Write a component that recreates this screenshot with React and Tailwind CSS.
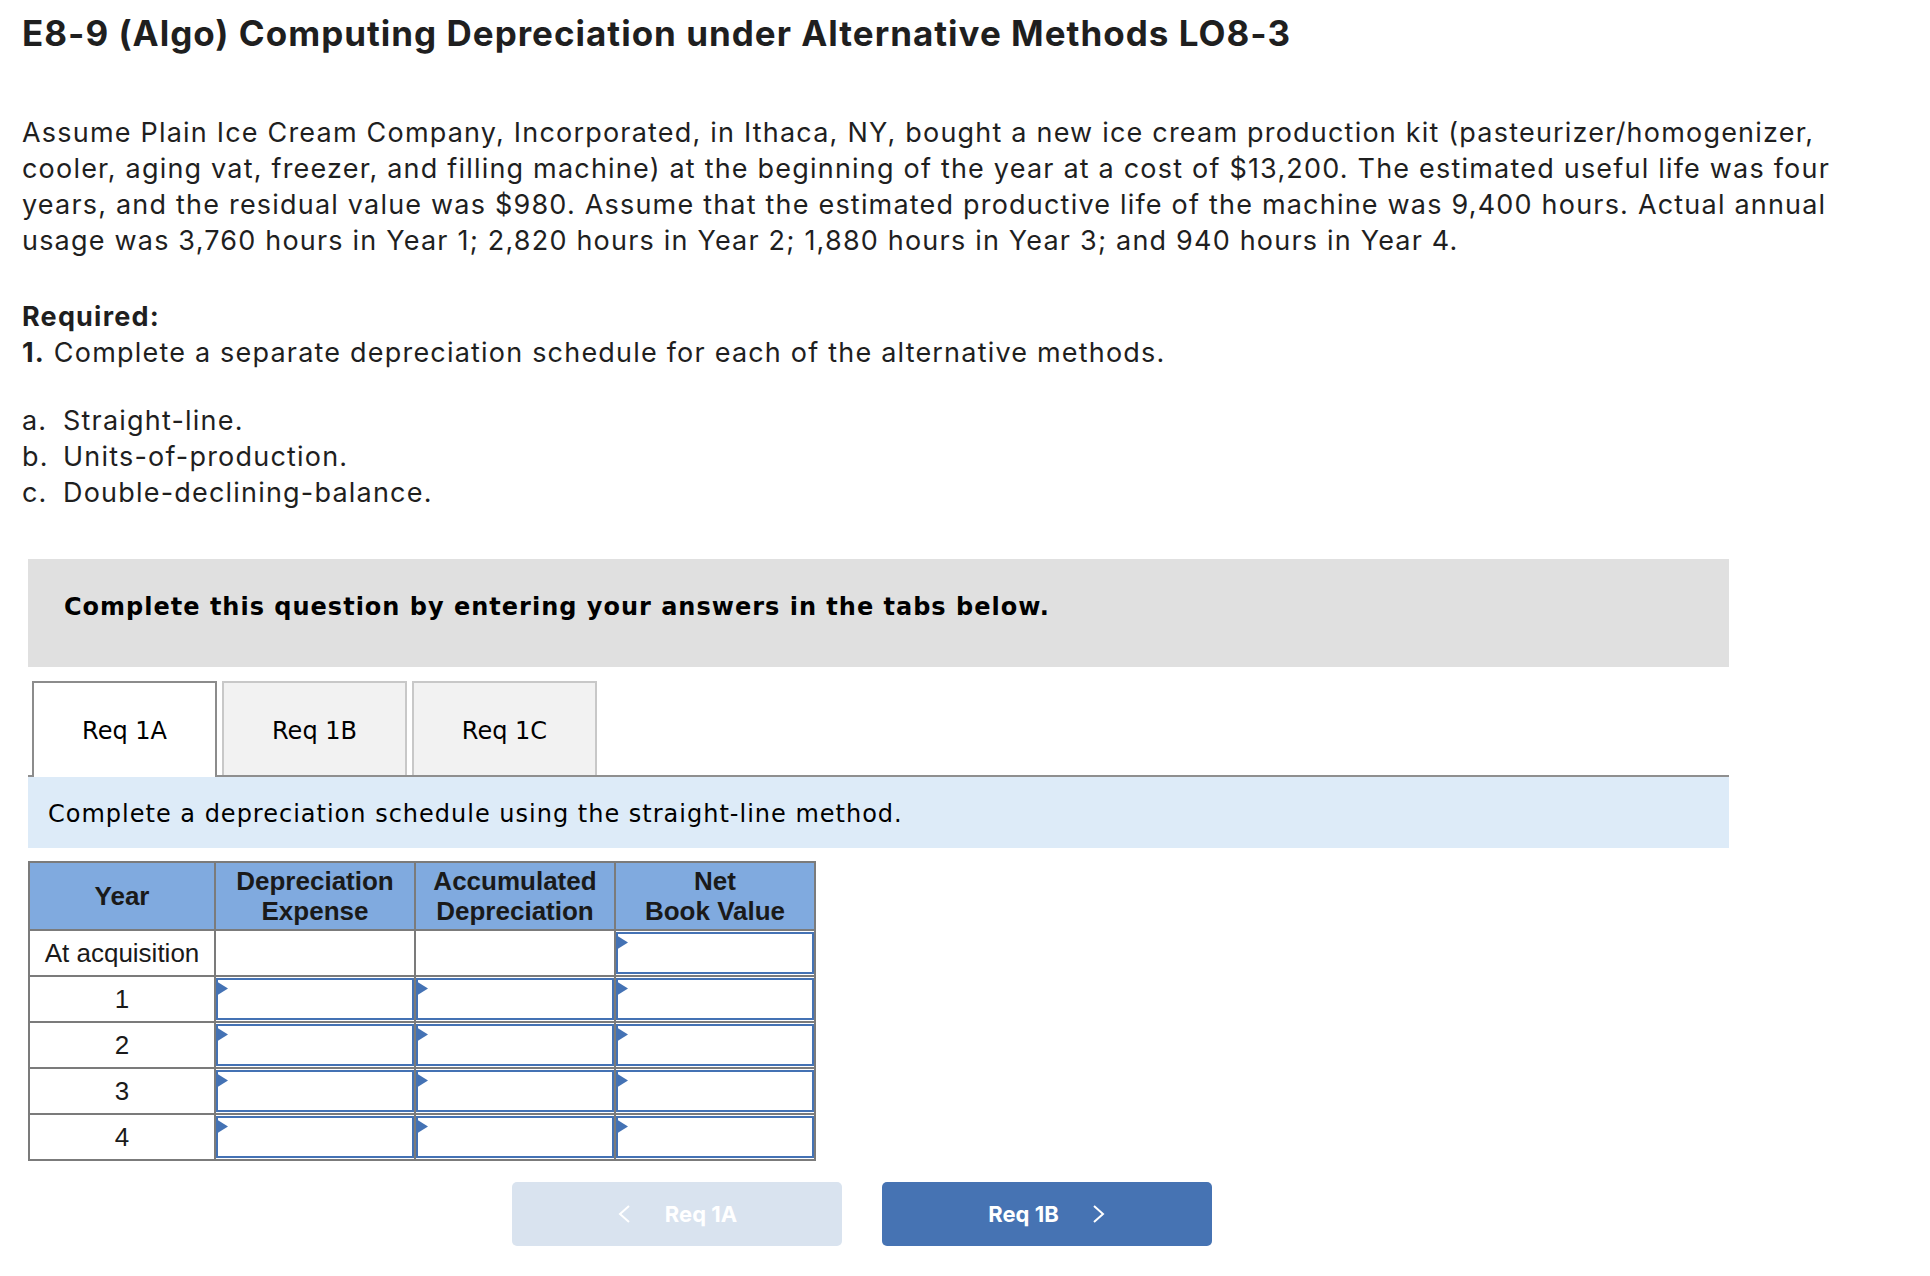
import React from "react";

const sans = { fontFamily: "Inter, 'Open Sans', sans-serif" };
const verdana = { fontFamily: "'DejaVu Sans', Verdana, sans-serif" };
const arial = { fontFamily: "'Liberation Sans', Arial, sans-serif" };

function Tri() {
  return (
    <svg className="absolute left-[-2px] top-[1px]" width="12" height="15" viewBox="0 0 12 15">
      <polygon points="0,0 12,7.5 0,15" fill="#4472b4" />
    </svg>
  );
}

function InputCell() {
  return (
    <td className="border-2 border-[#7b7b7b] p-0 h-[46px]">
      <div className="relative h-[42px] border-2 border-[#4472b4] bg-white">
        <Tri />
      </div>
    </td>
  );
}

function Chevron({ dir }) {
  return (
    <svg width="14" height="18" viewBox="0 0 14 18" fill="none">
      {dir === "left" ? (
        <polyline points="12,1 3,9 12,17" stroke="white" strokeWidth="2" />
      ) : (
        <polyline points="2,1 11,9 2,17" stroke="white" strokeWidth="2" />
      )}
    </svg>
  );
}

export default function App() {
  const lines = [
    "Assume Plain Ice Cream Company, Incorporated, in Ithaca, NY, bought a new ice cream production kit (pasteurizer/homogenizer,",
    "cooler, aging vat, freezer, and filling machine) at the beginning of the year at a cost of $13,200. The estimated useful life was four",
    "years, and the residual value was $980. Assume that the estimated productive life of the machine was 9,400 hours. Actual annual",
    "usage was 3,760 hours in Year 1; 2,820 hours in Year 2; 1,880 hours in Year 3; and 940 hours in Year 4.",
  ];
  return (
    <div className="w-[1930px] min-h-[1276px] bg-white text-[#1f1f1f]">
      <div className="pl-[22px]" style={sans}>
        <h1 className="pt-[13px] text-[35px] leading-[40px] font-bold tracking-[1px] whitespace-nowrap">
          E8-9 (Algo) Computing Depreciation under Alternative Methods LO8-3
        </h1>
        <p className="mt-[62px] text-[27px] leading-[36px] tracking-[1.2px] whitespace-nowrap">
          {lines.map((l, i) => (
            <span key={i} className="block">{l}</span>
          ))}
        </p>
        <div className="mt-[40px] text-[27px] leading-[36px] tracking-[1.2px]">
          <div className="font-bold">Required:</div>
          <div className="whitespace-nowrap">
            <span className="font-bold">1.</span> Complete a separate depreciation schedule for each of the alternative methods.
          </div>
        </div>
        <div className="mt-[32px] text-[27px] leading-[36px] tracking-[1.2px]">
          {[
            ["a.", "Straight-line."],
            ["b.", "Units-of-production."],
            ["c.", "Double-declining-balance."],
          ].map(([k, v]) => (
            <div key={k} className="flex">
              <span className="w-[41px]">{k}</span>
              <span>{v}</span>
            </div>
          ))}
        </div>
      </div>

      <div className="ml-[28px] w-[1701px] mt-[48px]">
        <div className="h-[108px] bg-[#e0e0e0] pt-[30px] pl-[36px] text-[24px] font-bold tracking-[1px] text-black" style={verdana}>
          Complete this question by entering your answers in the tabs below.
        </div>

        <div className="mt-[14px] flex gap-[5px] pl-[4px] border-b-2 border-[#8f8f8f] text-[24px] text-black" style={verdana}>
          <div className="w-[185px] h-[96px] -mb-[2px] pt-[2px] bg-white border-2 border-b-0 border-[#8c8c8c] flex items-center justify-center">
            Req 1A
          </div>
          <div className="w-[185px] h-[94px] pt-[4px] bg-[#f2f2f2] border-2 border-b-0 border-[#c8c8c8] flex items-center justify-center">
            Req 1B
          </div>
          <div className="w-[185px] h-[94px] pt-[4px] bg-[#f2f2f2] border-2 border-b-0 border-[#c8c8c8] flex items-center justify-center">
            Req 1C
          </div>
        </div>

        <div className="h-[71px] bg-[#ddebf8] pl-[20px] pt-[2px] flex items-center text-[24px] tracking-[1px] text-black" style={verdana}>
          Complete a depreciation schedule using the straight-line method.
        </div>

        <table className="mt-[13px] border-collapse border-2 border-[#7b7b7b] text-[26px] text-[#1a1a1a]" style={arial}>
          <thead>
            <tr className="bg-[#80aadf]">
              <th className="w-[186px] h-[68px] border-2 border-[#7b7b7b] font-bold leading-[30px]">Year</th>
              <th className="w-[200px] border-2 border-[#7b7b7b] font-bold leading-[30px]">Depreciation<br />Expense</th>
              <th className="w-[200px] border-2 border-[#7b7b7b] font-bold leading-[30px]">Accumulated<br />Depreciation</th>
              <th className="w-[200px] border-2 border-[#7b7b7b] font-bold leading-[30px]">Net<br />Book Value</th>
            </tr>
          </thead>
          <tbody>
            <tr>
              <td className="border-2 border-[#7b7b7b] h-[46px] text-center">At acquisition</td>
              <td className="border-2 border-[#7b7b7b]"></td>
              <td className="border-2 border-[#7b7b7b]"></td>
              <InputCell />
            </tr>
            {[1, 2, 3, 4].map((n) => (
              <tr key={n}>
                <td className="border-2 border-[#7b7b7b] h-[46px] text-center">{n}</td>
                <InputCell />
                <InputCell />
                <InputCell />
              </tr>
            ))}
          </tbody>
        </table>

        <div className="mt-[21px] ml-[484px] flex gap-[40px] text-[22px] font-bold text-white" style={sans}>
          <div className="w-[330px] h-[64px] rounded-[5px] bg-[#d9e3ef] flex items-center justify-center gap-[34px]">
            <Chevron dir="left" />
            <span>Req 1A</span>
          </div>
          <div className="w-[330px] h-[64px] rounded-[5px] bg-[#4673b3] flex items-center justify-center gap-[33px]">
            <span>Req 1B</span>
            <Chevron dir="right" />
          </div>
        </div>
      </div>
    </div>
  );
}
